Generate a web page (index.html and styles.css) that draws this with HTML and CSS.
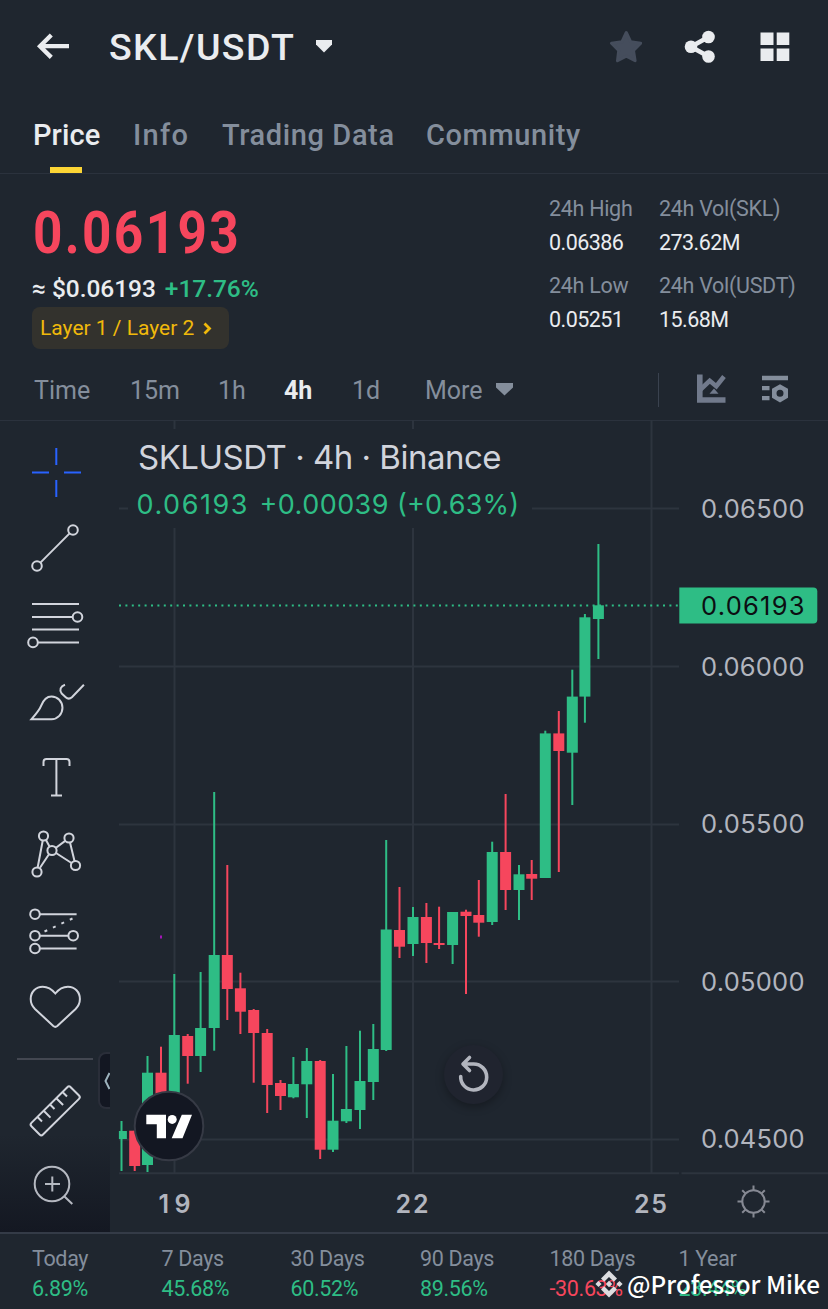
FILE: index.html
```html
<!DOCTYPE html>
<html lang="en">
<head>
<meta charset="utf-8">
<title>SKL/USDT</title>
<link rel="stylesheet" href="styles.css">
</head>
<body>
<header class="topbar">
  <svg class="back" width="34" height="28" viewBox="36 32 34 28"><path d="M69 46.2H40M51.3 35 40 46.2l11.300 11.200" fill="none" stroke="#eaecef" stroke-width="4.300"/></svg>
  <h1 class="pair">SKL/USDT</h1>
  <svg class="pair-caret" width="16" height="14" viewBox="0 0 16 14"><path d="M0 0h16v4.500L8 12.500 0 4.500z" fill="#eaecef"/></svg>
  <div class="actions">
    <svg width="34" height="34" viewBox="608 30 34 34"><path d="M626.300 32.500l4.400 9.300 10 1.400-7.200 7.200 1.600 10.300-8.800-4.500-8.800 4.500 1.200-10.300-7.200-7.200 10.400-1.400z" fill="#454d5c" stroke="#454d5c" stroke-width="3" stroke-linejoin="round"/></svg>
    <svg width="34" height="34" viewBox="683 30 34 34" fill="#eaecef"><path d="M708.500 37 691 46.700l17.500 9.800" fill="none" stroke="#eaecef" stroke-width="4.600"/><circle cx="708.500" cy="37" r="6.300"/><circle cx="691" cy="46.700" r="6.300"/><circle cx="708.500" cy="56.500" r="6.300"/></svg>
    <svg width="34" height="34" viewBox="758 30 34 34" fill="#eaecef"><path d="M760.500 32.500h13v12.500h-13zM776.700 32.500h12.600v12.500h-12.600zM760.500 48.500h13v12.500h-13zM776.700 48.500h12.600v12.500h-12.600z"/></svg>
  </div>
</header>

<nav class="tabs">
  <a class="tab tab-active">Price</a>
  <a class="tab tab-info">Info</a>
  <a class="tab tab-data">Trading Data</a>
  <a class="tab tab-community">Community</a>
</nav>

<section class="summary">
  <div class="quote">
    <div class="last">0.06193</div>
    <div class="fiat"><span class="fiat-value">≈ $0.06193</span><span class="change up">+17.76%</span></div>
    <a class="chip"><span>Layer 1 / Layer 2</span><svg width="9" height="13" viewBox="0 0 9 13"><path d="M1.500 1.500l5 5-5 5" fill="none" stroke="#f0b90b" stroke-width="2.800"/></svg></a>
  </div>
  <dl class="day">
    <div><dt>24h High</dt><dd>0.06386</dd></div>
    <div><dt class="vol">24h Vol(SKL)</dt><dd>273.62M</dd></div>
    <div><dt>24h Low</dt><dd>0.05251</dd></div>
    <div><dt class="vol">24h Vol(USDT)</dt><dd>15.68M</dd></div>
  </dl>
</section>

<nav class="frames">
  <a class="frame">Time</a><a class="frame">15m</a><a class="frame">1h</a><a class="frame frame-active">4h</a><a class="frame">1d</a><a class="frame">More</a>
  <svg class="more-caret" width="18" height="13" viewBox="0 0 18 13"><path d="M0 0h17v4.500L8.500 12.500 0 4.500z" fill="#848e9c"/></svg>
  <i class="rule"></i>
  <svg class="indicator" width="30" height="30" viewBox="696 373 30 30"><path d="M697 374.500h5.600v22.800h22.900v5.400H697z" fill="#717a8c"/><path d="M700 390l9.700-9.200 6.600 5.400 7.700-9.700" fill="none" stroke="#717a8c" stroke-width="4.600"/><path d="M709.500 393.800l4.500-5.300 4.500 5.300z" fill="#717a8c"/></svg>
  <svg class="settings" width="28" height="30" viewBox="761 374 28 30"><path fill="#848e9c" fill-rule="evenodd" d="M762 375.700h26v4.600h-26zM762 386h7.500v4.300H762zM762 396h7.500v4.300H762zM780 384.300l8 4.500v9l-8 4.600-8-4.600v-9zM780 389.800a3.500 3.500 0 1 0 0 7 3.500 3.500 0 1 0 0-7z"/></svg>
</nav>

<main class="chart">
  <aside class="tools">
    <svg class="tool" viewBox="0 434 110 76"><path class="cursor" d="M56.300 448v17M56.300 480v17M32 472.500h17M64 472.500h17"/></svg>
    <svg class="tool" viewBox="0 510 110 76"><circle cx="73" cy="530" r="4.800"/><circle cx="37" cy="566" r="4.800"/><path d="M69.600 533.400l-29.200 29.200"/></svg>
    <svg class="tool" viewBox="0 586 110 76"><path d="M32 604h47M32 617h40.500M32 629.600h47M38 642.400h41"/><circle cx="77.500" cy="617" r="4.800"/><circle cx="33" cy="642.400" r="4.800"/></svg>
    <svg class="tool" viewBox="0 662 110 76"><path d="M31.500 719.200c4-4.500 8-9 9.700-13.500 2-5.500 5-9.300 10.300-9.300a11 11.400 0 0 1 0 22.800zM65 684.800c-4.500 1.500-6 5.400-3.300 8.700l4 3.700q3 2.800 6.200 0l12-12.400"/></svg>
    <svg class="tool" viewBox="0 738 110 76"><path d="M43.500 766v-4q0-3 3-3h20q3 0 3 3v4M56.400 759v36.500M51 795.500h11"/></svg>
    <svg class="tool" viewBox="0 814 110 76"><path d="M42.700 840.700l-5 26.500M46 840l3.500 6.500M56 847.800l9.200-6.900M70 842.600l4.500 18.300M56 853l15.500 10M49 854.300l-9 13.500"/><circle cx="43.500" cy="836" r="4.600"/><circle cx="69" cy="838" r="4.600"/><circle cx="52" cy="850.500" r="4.600"/><circle cx="37" cy="872" r="4.600"/><circle cx="75.500" cy="865.500" r="4.600"/></svg>
    <svg class="tool" viewBox="0 890 110 76"><path d="M40 914.200h36.600M40 935.700h28.300M40 948.500h36.600"/><path d="M44.500 931.500l28-13" stroke-dasharray="3 6.300"/><circle cx="35" cy="914.200" r="4.800"/><circle cx="35" cy="935.700" r="4.800"/><circle cx="73.200" cy="935.700" r="4.800"/><circle cx="35" cy="948.500" r="4.800"/></svg>
    <svg class="tool" viewBox="0 966 110 76"><path d="M55.300 993.500c-4-5-8-6.800-12.600-6.800-7 0-12 5.500-12 12.300 0 4 1.300 7 4.300 10l18.300 17q2 1.700 4 0l18.300-17c3-3 4.300-6 4.300-10 0-6.800-5-12.300-12-12.300-4.600 0-8.600 1.800-12.600 6.800z"/></svg>
    <i class="tools-rule"></i>
    <svg class="tool" viewBox="0 1072 110 76"><path d="M67.300 1087.200q1.700-1.700 3.400 0l8.300 8.300q1.700 1.700 0 3.400L43 1134.500q-1.700 1.700-3.400 0l-8.200-8.200q-1.700-1.700 0-3.400zM37.500 1117l4.500 4.500M43.700 1110.800l6.800 6.800M50 1104.500l4.500 4.500M56.300 1098.200l6.800 6.800M62.500 1092l4.500 4.500"/></svg>
    <svg class="tool" viewBox="0 1148 110 76"><g class="fade"><circle cx="52" cy="1184" r="17.300"/><path d="M45 1184h15M52.300 1176.500v15M64.500 1196.500l7.800 7.500"/></g></svg>
    <span class="collapse"><svg width="7" height="18" viewBox="0 0 7 18"><path d="M6.500 1 2.500 9l4 8" fill="none" stroke="#9db2bd" stroke-width="2"/></svg></span>
  </aside>

  <svg class="plot" viewBox="110 420 718 812">
    <path class="grid" d="M174.500 420v753M413 420v753M651.500 420v753M119 508.500h560M119 666.500h560M119 824.500h560M119 981.500h560M119 1139.500h560M119 1173.200h560M681.500 1173.200H828"/>
    <path class="mask" d="M128 429h404v99H128z"/>
    <text class="symbol" x="138" y="468.700" textLength="363.500">SKLUSDT · 4h · Binance</text>
    <text class="ohlc" x="136.500" y="514" textLength="111">0.06193</text>
    <text class="ohlc" x="259.500" y="514" textLength="129">+0.00039</text>
    <text class="ohlc" x="397" y="514" textLength="122">(+0.63%)</text>
    <path class="last-line" d="M119 605.500h559"/>
    <g id="candles"></g>
    <path fill="#a316b8" d="M160 935.500h2v3h-2z"/>
    <g class="price-axis">
      <text x="701" y="517.500" textLength="103.500">0.06500</text>
      <text x="701" y="675.500" textLength="103.500">0.06000</text>
      <text x="701" y="833" textLength="103.500">0.05500</text>
      <text x="701" y="990.500" textLength="103.500">0.05000</text>
      <text x="701" y="1148" textLength="103.500">0.04500</text>
    </g>
    <path d="M679.300 587.500h134q4 0 4 4v28q0 4-4 4h-134z" fill="#2ebd85"/>
    <text class="tag" x="701" y="615" textLength="103.500">0.06193</text>
    <g class="time-axis">
      <text x="158.500" y="1212.800" textLength="32">19</text>
      <text x="395.500" y="1212.800" textLength="33">22</text>
      <text x="634" y="1212.800" textLength="33">25</text>
    </g>
    <g fill="none" stroke="#868993" stroke-width="2"><circle cx="753.500" cy="1201.500" r="11.200"/><path d="M753.500 1190v-4.500M753.500 1213v4.500M742 1201.500h-4.500M765 1201.500h4.500M745.400 1193.400l-3.200-3.200M761.600 1193.400l3.200-3.200M745.400 1209.600l-3.200 3.200M761.600 1209.600l3.200 3.200"/></g>
    <g class="brand"><circle cx="169" cy="1126" r="34.300" fill="#131722" stroke="#363a45" stroke-width="2"/><path d="M146.300 1114.800H166v23.400h-9.200v-13.900h-10.500zM181.800 1114.800H192l-9.500 23.400h-10.800z" fill="#fff"/><circle cx="172.200" cy="1119.400" r="4.500" fill="#fff"/></g>
    <g class="reset"><circle cx="473.500" cy="1074.500" r="29.500" fill="#20242f"/><path d="M460.700 1076.500A13 13 0 1 0 473.700 1064H463.500M469.500 1057.500l-6.500 6.500 6.500 6.500" fill="none" stroke="#b2b5be" stroke-width="3.600" stroke-linecap="round" stroke-linejoin="round"/></g>
  </svg>
</main>

<footer class="returns">
  <div class="period"><span>Today</span><b class="up">6.89%</b></div>
  <div class="period"><span>7 Days</span><b class="up">45.68%</b></div>
  <div class="period"><span>30 Days</span><b class="up">60.52%</b></div>
  <div class="period"><span>90 Days</span><b class="up">89.56%</b></div>
  <div class="period"><span>180 Days</span><b class="down">-30.63%</b></div>
  <div class="period"><span>1 Year</span><b class="up">23.44%</b></div>
  <div class="watermark">
    <svg width="28" height="28" viewBox="-14 -14 28 28" fill="#dcdde0"><path d="M0-13.500l8 8-3.200 3.200L0-7.100l-4.800 4.800L-8-5.500zM0 13.500l8-8-3.200-3.200L0 7.100l-4.800-4.800L-8 5.500zM-10.500-3.100L-7.400 0l-3.100 3.100L-13.600 0zM10.500-3.100L13.600 0l-3.100 3.100L7.400 0zM0-3.200L3.200 0 0 3.200-3.200 0z"/></svg>
    <span>@Professor Mike</span>
  </div>
</footer>
<script src="candles.js"></script>
</body>
</html>
```
FILE: styles.css
```css
* { box-sizing: border-box; }
body { margin: 0; width: 828px; height: 1309px; overflow: hidden; background: #1f262f; color: #eaecef; font-family: Roboto, "Liberation Sans", sans-serif; display: flex; flex-direction: column; }
svg { display: block; flex: none; }
.up { color: #2ebd85; }
.down { color: #f6465d; }

.topbar { height: 94px; display: flex; align-items: center; padding: 0 36px; flex: none; }
.back { margin-bottom: 2px; }
.pair { margin: 0 0 0 39px; width: 207px; font-size: 37.500px; line-height: 44px; font-weight: 500; letter-spacing: 1.400px; }
.pair-caret { margin-bottom: 1px; }
.actions { margin-left: auto; display: flex; gap: 41px; }

.tabs { height: 80px; flex: none; display: flex; padding: 0 33px; border-bottom: 1px solid #2b323d; }
.tab { position: relative; height: 79px; line-height: 83px; font-size: 29px; font-weight: 500; color: #848e9c; letter-spacing: .6px; }
.tab-active { width: 100px; color: #eaecef; letter-spacing: .1px; }
.tab-info { width: 89px; letter-spacing: 1.300px; }
.tab-data { width: 204px; }
.tab-active::after { content: ""; position: absolute; left: 17px; bottom: 0; width: 32px; height: 6px; background: #fcd535; }

.summary { height: 184px; flex: none; display: flex; padding: 24px 0 0 32px; }
.quote { width: 517px; }
.last { height: 70px; line-height: 70px; margin-left: 1px; font-size: 59px; font-weight: 700; letter-spacing: 2.700px; color: #f6465d; transform: scaleX(.87); transform-origin: 0 0; }
.fiat { height: 40px; line-height: 41px; font-size: 24.500px; font-weight: 500; letter-spacing: -.05px; display: flex; gap: 9px; }
.chip { display: flex; align-items: center; gap: 9px; width: 197px; height: 42px; margin-top: -1px; padding-left: 8px; border-radius: 8px; background: #33322d; color: #f0b90b; font-size: 21px; }
.day { margin: 0; display: grid; grid-template-columns: 110px 169px; grid-template-rows: 76.500px 76.500px; font-size: 21.500px; padding-top: 1px; }
.day dt { height: 20px; line-height: 20px; color: #848e9c; letter-spacing: -.3px; }
.day dd { margin: 14px 0 0; height: 20px; line-height: 20px; letter-spacing: -.55px; }

.frames { height: 62px; flex: none; display: flex; align-items: center; padding: 1px 0 0 34px; font-size: 25px; color: #848e9c; }
.frame { padding-top: 2px; }
.frame:nth-of-type(1) { width: 96px; }
.frame:nth-of-type(2) { width: 88px; }
.frame:nth-of-type(3) { width: 66px; }
.frame:nth-of-type(4) { width: 68px; }
.frame:nth-of-type(5) { width: 73px; }
.frame:nth-of-type(6) { width: 71px; }
.frame-active { color: #eaecef; font-weight: 700; }
.rule { width: 1px; height: 34px; margin-left: 144px; background: #3a424f; }
.indicator { margin: 0 0 3px 37px; }
.settings { margin: 0 0 1px 35px; }

.chart { height: 812px; flex: none; display: flex; border-top: 1px solid #2b323d; }
.tools { position: relative; width: 110px; padding-top: 13px; display: flex; flex-direction: column; background: linear-gradient(#1f262f 88%, #141822 100%); }
.tool { width: 110px; height: 76px; fill: none; stroke: #d1d4dc; stroke-width: 2; }
.cursor { stroke: #2962ff; }
.fade { opacity: .85; }
.tools-rule { height: 2px; width: 76px; margin: 16px 0 12px 17px; background: #434751; flex: none; }
.collapse { position: absolute; right: 0; top: 631px; width: 12px; height: 57px; display: flex; align-items: center; background: #131722; border: 2px solid #2a2e39; border-right: 0; border-radius: 8px 0 0 8px; padding: 0 0 0 3px; }
.plot { width: 718px; height: 812px; margin-top: -1px; font-family: Inter, "Liberation Sans", sans-serif; }
.grid { fill: none; stroke: #2d343e; stroke-width: 2; }
.mask { fill: #1f262f; }
.symbol { font-size: 33px; fill: #d1d4dc; }
.ohlc { font-size: 27px; fill: #2ebd85; }
.price-axis { font-size: 25.500px; fill: #b2b5be; }
.tag { font-size: 25.500px; fill: #0c0e12; }
.time-axis { font-size: 25px; font-weight: 600; fill: #b2b5be; }
.last-line { stroke: #2ebd85; stroke-width: 2; stroke-dasharray: 2 4.400; }
.rise { fill: #2ebd85; }
.fall { fill: #f6465d; }
.reset { filter: drop-shadow(0 3px 4px rgba(0, 0, 0, .3)); }

.returns { position: relative; flex: 1; display: grid; grid-template-columns: 129.500px 129px 129.500px 129.500px 129px 140px; padding: 15px 0 0 32px; border-top: 2px solid #343b47; font-size: 21.500px; }
.period { display: flex; flex-direction: column; letter-spacing: -.35px; }
.period span { line-height: 20px; color: #848e9c; }
.period b { font-weight: 400; line-height: 20px; margin-top: 10px; }
.watermark { position: absolute; right: 8px; top: 34px; display: flex; align-items: center; gap: 4px; color: #fff; font: 500 24.200px/32px "Noto Sans CJK SC", sans-serif; white-space: nowrap; }
```
FILE: candles.js
```js
// [center x, wick top, body top, body bottom, wick bottom, direction]
const candles = [
  [122.9, 1121, 1131, 1139, 1171, 1], [134.7, 1130.7, 1130.7, 1166, 1171, 0], [147.5, 1056, 1072.7, 1165, 1172, 1],
  [161, 1046.7, 1072.7, 1110, 1112, 0], [174.3, 974, 1035, 1110, 1115, 1], [187.7, 1034, 1036, 1056, 1083.7, 0],
  [200.6, 972, 1028, 1056, 1072, 1], [214.2, 792, 955, 1028, 1050.7, 1], [227.3, 865, 955, 989, 1020, 0],
  [240.4, 972.7, 988.3, 1011.7, 1034, 0], [253.7, 1009, 1010, 1033, 1082.7, 0], [267.2, 1029, 1033, 1085, 1113, 0],
  [280.5, 1080, 1083, 1096, 1110, 0], [293.4, 1057, 1084, 1097.3, 1098.3, 1], [306.8, 1048, 1061, 1084.3, 1118, 1],
  [320.2, 1060, 1061, 1149.7, 1159, 0], [333, 1074, 1120.7, 1149.7, 1152, 1], [346.4, 1046, 1109, 1121.3, 1123, 1],
  [360, 1030.7, 1081, 1110, 1129, 1], [373.3, 1024, 1049, 1082, 1100, 1], [386.2, 840, 929.5, 1050, 1051, 1],
  [399.5, 887, 930, 946.7, 958, 0], [413, 907, 917, 944, 956, 1], [426.4, 903, 917, 943, 963, 0],
  [439.1, 906.7, 943, 945, 949, 0], [452.6, 912, 912, 945, 964, 1], [466, 909.7, 911.7, 916, 994, 0],
  [478.8, 880, 915, 922.7, 936.7, 0], [492.2, 841.7, 852, 922, 925, 1], [505.6, 794, 852, 890, 910, 0],
  [519, 865, 874.3, 890, 920, 1], [531.7, 860, 874, 878.7, 900, 0], [545.3, 730.7, 733.4, 878, 878, 1],
  [558.8, 711, 733.4, 751, 872, 0], [572.3, 669.7, 696.6, 752.7, 805, 1], [584.9, 614, 617.3, 696.6, 722.7, 1],
  [598.4, 544, 605.3, 619, 659, 1]
];

const layer = document.getElementById("candles");
function bar(x, y, width, height, name) {
  const rect = document.createElementNS("http://www.w3.org/2000/svg", "rect");
  rect.setAttribute("x", x);
  rect.setAttribute("y", y);
  rect.setAttribute("width", width);
  rect.setAttribute("height", height);
  rect.setAttribute("class", name);
  layer.appendChild(rect);
}
candles.forEach(([x, high, top, bottom, low, up], i) => {
  const name = up ? "rise" : "fall";
  const half = i === 0 ? 4 : 5.5;
  const wickX = i === 0 ? 121.500 : x;
  bar(wickX - 1, high, 2, low - high, name);
  bar(x - half, top, half * 2, bottom - top, name);
});
```
